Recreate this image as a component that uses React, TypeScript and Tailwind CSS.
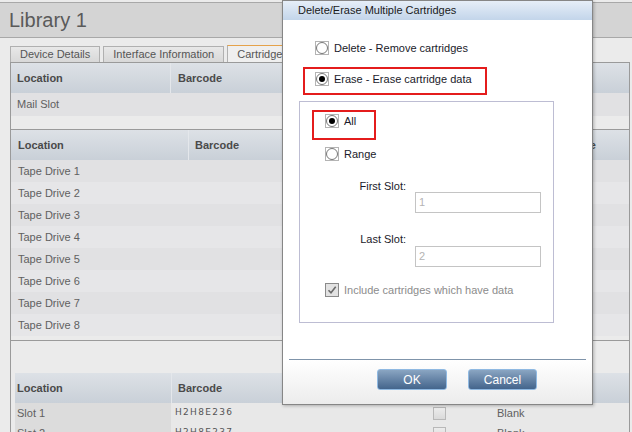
import React from 'react';

const font = { fontFamily: '"Liberation Sans", Arial, sans-serif' };

const Radio = ({ checked = false }: { checked?: boolean }) => (
  <span className="flex h-[14px] w-[14px] shrink-0 items-center justify-center border border-[#b4b4b4] bg-white">
    <span className="flex h-[12px] w-[12px] items-center justify-center rounded-full border border-[#777] bg-white">
      {checked && <span className="h-[6px] w-[6px] rounded-full bg-black" />}
    </span>
  </span>
);

const tapeDrives = [1, 2, 3, 4, 5, 6, 7, 8];

const App = () => {
  return (
    <div className="relative h-[432px] w-[632px] overflow-hidden bg-[#ebebeb] text-[11px]" style={font}>
      {/* page header */}
      <div className="mt-[2px] flex h-[36px] items-center border-y border-[#a8a8a8] bg-[#d4d4d4] pl-[9px]">
        <span className="text-[20px] text-[#5a5a5a]">Library 1</span>
      </div>

      {/* tabs */}
      <div className="ml-[10px] mt-[7px] flex items-end gap-[3px]">
        <div className="flex h-[16px] items-center border border-b-0 border-[#b0b0b0] bg-gradient-to-b from-[#e8e8e8] to-[#d8d8d8] px-[9px] text-[11px] text-[#555]">Device Details</div>
        <div className="flex h-[16px] items-center border border-b-0 border-[#b0b0b0] bg-gradient-to-b from-[#e8e8e8] to-[#d8d8d8] px-[9px] text-[11px] text-[#555]">Interface Information</div>
        <div className="flex h-[17px] w-[80px] items-center border border-b-0 border-[#b0b0b0] border-t-[#e5a24a] bg-[#efefef] px-[9px] text-[11px] text-[#555]">Cartridges</div>
      </div>

      {/* panel */}
      <div className="ml-[10px] mr-[2px] h-[400px] border border-[#9a9a9a] bg-[#ebebeb]">
        {/* table 1 */}
        <div className="grid grid-cols-[160px_1fr]">
          <div className="flex h-[30px] items-center border-r border-[#e4e7eb] bg-gradient-to-b from-[#dde1e6] to-[#c9d0d8] pl-[6px] font-bold text-[#4a4a4a]">Location</div>
          <div className="flex h-[30px] items-center bg-gradient-to-b from-[#dde1e6] to-[#c9d0d8] pl-[7px] font-bold text-[#4a4a4a]">Barcode</div>
          <div className="col-span-2 flex h-[23px] items-center bg-[#e1e1e3] pl-[6px] text-[#606060]">Mail Slot</div>
        </div>

        {/* table 2 */}
        <div className="mt-[13px] border-y border-[#9a9a9a] pb-[4px]">
          <div className="grid grid-cols-[178px_376px_1fr]">
            <div className="flex h-[30px] items-center border-r border-[#e4e7eb] bg-gradient-to-b from-[#dde1e6] to-[#c9d0d8] pl-[7px] font-bold text-[#4a4a4a]">Location</div>
            <div className="flex h-[30px] items-center bg-gradient-to-b from-[#dde1e6] to-[#c9d0d8] pl-[6px] font-bold text-[#4a4a4a]">Barcode</div>
            <div className="flex h-[30px] items-center bg-gradient-to-b from-[#dde1e6] to-[#c9d0d8] pl-[6px] font-bold text-[#4a4a4a]">Type</div>
          </div>
          {tapeDrives.map((n) => (
            <div
              key={n}
              className={`flex h-[22px] items-center pl-[7px] text-[#606060] ${n % 2 === 1 ? 'bg-[#e1e1e3]' : 'bg-[#e6e6e8]'}`}
            >
              Tape Drive {n}
            </div>
          ))}
        </div>

        {/* table 3 */}
        <div className="ml-[4px] mt-[32px] grid grid-cols-[156px_262px_59px_1fr]">
          <div className="flex h-[30px] items-center bg-gradient-to-b from-[#dde1e6] to-[#c9d0d8] pl-[2px] font-bold text-[#4a4a4a]">Location</div>
          <div className="flex h-[30px] items-center border-l border-[#e4e7eb] bg-gradient-to-b from-[#dde1e6] to-[#c9d0d8] pl-[6px] font-bold text-[#4a4a4a]">Barcode</div>
          <div className="h-[30px] bg-gradient-to-b from-[#dde1e6] to-[#c9d0d8]" />
          <div className="h-[30px] bg-gradient-to-b from-[#dde1e6] to-[#c9d0d8]" />
          {['H2H8E236', 'H2H8E237'].map((code, i) => (
            <React.Fragment key={code}>
              <div className="flex h-[20px] items-center bg-[#dcdcdc] pl-[2px] text-[#606060]">Slot {i + 1}</div>
              <div className="flex h-[20px] items-center bg-[#e8e8e8] pl-[4px] text-[9px] tracking-[1.3px] text-[#555]" style={{ fontFamily: '"DejaVu Sans", sans-serif' }}>{code}</div>
              <div className="flex h-[20px] items-center bg-[#e8e8e8]">
                <span className="h-[13px] w-[13px] border border-[#b8b8b8] bg-gradient-to-b from-[#ececec] to-[#dadada]" />
              </div>
              <div className="flex h-[20px] items-center bg-[#e8e8e8] pl-[5px] text-[#606060]">Blank</div>
            </React.Fragment>
          ))}
        </div>
      </div>

      {/* dialog */}
      <div className="absolute left-[282px] top-0 flex h-[405px] w-[311px] flex-col border border-[#868686] bg-white text-[11px] shadow-[1px_1px_3px_rgba(0,0,0,0.25)]">
        <div className="flex h-[19px] shrink-0 items-center bg-gradient-to-b from-[#e6eef8] to-[#c3d5ea] pl-[15px] text-[11px] text-[#1a1a1a]">
          Delete/Erase Multiple Cartridges
        </div>

        <div className="flex flex-col pl-[16px]">
          <div className="ml-[16px] mt-[21px] flex h-[14px] items-center gap-[5px] text-[#1a1a2a]">
            <Radio />
            <span>Delete - Remove cartridges</span>
          </div>

          <div className="ml-[4px] mt-[12px] flex h-[28px] w-[184px] items-start border-2 border-[#e41c1c] pl-[10px] pt-[3px] text-[#1a1a2a]">
            <div className="flex h-[14px] items-center gap-[5px]">
              <Radio checked />
              <span>Erase - Erase cartridge data</span>
            </div>
          </div>

          <div className="mt-[6px] h-[222px] w-[255px] border border-[#bdbdd3]">
            <div className="ml-[12px] mt-[8px] flex h-[30px] w-[64px] items-start border-2 border-[#e41c1c] pl-[11px] pt-[2px] text-[#1a1a2a]">
              <div className="flex h-[14px] items-center gap-[5px]">
                <Radio checked />
                <span>All</span>
              </div>
            </div>

            <div className="ml-[25px] mt-[7px] flex h-[14px] items-center gap-[5px] text-[#1a1a2a]">
              <Radio />
              <span>Range</span>
            </div>

            <div className="mt-[18px] flex items-start">
              <span className="w-[106px] text-right leading-[14px] text-[#1a1a2a]">First Slot:</span>
              <div className="ml-[9px] mt-[13px] flex h-[21px] w-[126px] items-center border border-[#c4c4c4] pl-[3px] text-[#b4b4b4]">1</div>
            </div>

            <div className="mt-[19px] flex items-start">
              <span className="w-[106px] text-right leading-[14px] text-[#1a1a2a]">Last Slot:</span>
              <div className="ml-[9px] mt-[14px] flex h-[21px] w-[126px] items-center border border-[#c4c4c4] pl-[3px] text-[#b4b4b4]">2</div>
            </div>

            <div className="ml-[25px] mt-[16px] flex h-[14px] items-center gap-[5px]">
              <span className="flex h-[14px] w-[14px] items-center justify-center border border-[#8a8a8a] bg-[#e2e2e2]">
                <svg width="10" height="10" viewBox="0 0 10 10">
                  <path d="M1.5 5.2 L4 7.8 L8.7 1.8" fill="none" stroke="#6a6a6a" strokeWidth="1.6" />
                </svg>
              </span>
              <span className="text-[#8c8c8c]">Include cartridges which have data</span>
            </div>
          </div>
        </div>

        <div className="mx-[6px] mt-[36px] border-t border-[#7f94aa]" />

        <div className="flex flex-1 items-start justify-end gap-[21px] bg-gradient-to-b from-white to-[#ececec] pr-[55px] pt-[9px]">
          <button className="h-[21px] w-[70px] rounded-[3px] border border-[#8fb9e2] bg-gradient-to-b from-[#8aa5c2] to-[#44658c] text-[12px] text-white">OK</button>
          <button className="h-[21px] w-[69px] rounded-[3px] border border-[#8fb9e2] bg-gradient-to-b from-[#8aa5c2] to-[#44658c] text-[12px] text-white">Cancel</button>
        </div>
      </div>
    </div>
  );
};

export default App;
